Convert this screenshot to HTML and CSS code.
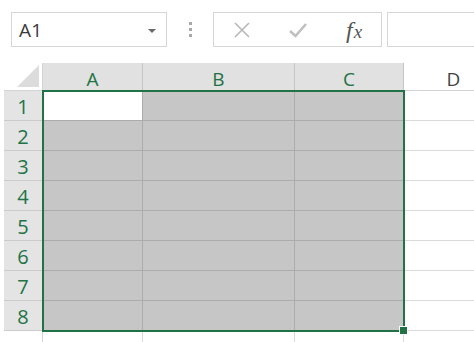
FILE: index.html
```html
<!DOCTYPE html>
<html>
<head>
<meta charset="utf-8">
<link rel="stylesheet" href="styles.css">
</head>
<body>
<div class="toolbar">
  <div class="namebox">
    <span class="ref">A1</span>
    <span class="arrow"></span>
  </div>
  <div class="grip"><i></i><i></i><i></i></div>
  <div class="fbuttons">
    <svg class="ico" width="20" height="20" viewBox="0 0 20 20"><path d="M3 3L17 17M17 3L3 17" stroke="#b8b8b8" stroke-width="1.6" fill="none"/></svg>
    <svg class="ico" width="20" height="20" viewBox="0 0 20 20"><path d="M2 11L7.5 16L18 4" stroke="#c0c0c0" stroke-width="2.6" fill="none"/></svg>
    <span class="fx">f<span class="x">x</span></span>
  </div>
  <div class="finput"></div>
</div>
<div class="sheet">
  <div class="grid">
    <div class="corner"><span class="tri"></span></div>
    <div class="ch sel">A</div>
    <div class="ch sel">B</div>
    <div class="ch sel">C</div>
    <div class="ch">D</div>

    <div class="rh sel">1</div><div class="c a1"></div><div class="c s"></div><div class="c s"></div><div class="c"></div>
    <div class="rh sel">2</div><div class="c s"></div><div class="c s"></div><div class="c s"></div><div class="c"></div>
    <div class="rh sel">3</div><div class="c s"></div><div class="c s"></div><div class="c s"></div><div class="c"></div>
    <div class="rh sel">4</div><div class="c s"></div><div class="c s"></div><div class="c s"></div><div class="c"></div>
    <div class="rh sel">5</div><div class="c s"></div><div class="c s"></div><div class="c s"></div><div class="c"></div>
    <div class="rh sel">6</div><div class="c s"></div><div class="c s"></div><div class="c s"></div><div class="c"></div>
    <div class="rh sel">7</div><div class="c s"></div><div class="c s"></div><div class="c s"></div><div class="c"></div>
    <div class="rh sel">8</div><div class="c s"></div><div class="c s"></div><div class="c s"></div><div class="c"></div>
    <div class="rh"></div><div class="c"></div><div class="c"></div><div class="c"></div><div class="c"></div>
  </div>
  <div class="selection"></div>
  <div class="handle"></div>
</div>
</body>
</html>
```
FILE: styles.css
```css
* { box-sizing: border-box; }
html, body { margin: 0; padding: 0; background: #fff; overflow: hidden; }
body {
  width: 474px; height: 342px;
  font-family: "Open Sans", "Noto Sans", sans-serif;
  color: #333;
}
.toolbar {
  display: flex;
  align-items: center;
  height: 63px;
  padding: 12px 0 16px 11px;
  overflow: hidden;
}
.toolbar > * { flex-shrink: 0; }
.namebox {
  width: 156px; height: 35px;
  border: 1px solid #d6d6d6;
  display: flex; align-items: center; justify-content: space-between;
  padding: 0 10px 0 7px;
}
.ref { font-size: 19px; color: #3a3a3a; letter-spacing: 0.3px; }
.arrow {
  width: 0; height: 0;
  border-left: 4px solid transparent;
  border-right: 4px solid transparent;
  border-top: 4px solid #6a6a6a;
  margin-top: 2px;
}
.grip {
  width: 46px;
  display: flex; flex-direction: column; align-items: center; gap: 3px;
}
.grip i { display: block; width: 3px; height: 3px; background: #a8a8a8; }
.fbuttons {
  width: 169px; height: 35px;
  border: 1px solid #d6d6d6;
  display: flex; align-items: center;
  padding-left: 18px;
}
.ico { display: block; }
.fbuttons .ico:nth-child(1) { margin-right: 36px; }
.fbuttons .ico:nth-child(2) { margin-right: 38px; }
.fx {
  font-family: "Liberation Serif", "DejaVu Serif", serif;
  font-style: italic;
  font-size: 24px; color: #555;
  line-height: 1;
}
.fx .x { font-size: 19px; margin-left: 1px; }
.finput {
  margin-left: 5px;
  width: 120px; height: 35px;
  border: 1px solid #d6d6d6;
}
.sheet { position: relative; width: 474px; height: 279px; overflow: hidden; }
.grid {
  display: grid;
  margin-left: 4px;
  grid-template-columns: 39px 100px 152px 109px 100px;
  grid-template-rows: 28px repeat(9, 30px);
}
.corner { position: relative; background: #fff; border-right: 1px solid #d4d4d4; border-bottom: 1px solid #d4d4d4; }
.tri {
  position: absolute; right: 3px; bottom: 3px;
  width: 0; height: 0;
  border-left: 22px solid transparent;
  border-bottom: 22px solid #dcdcdc;
}
.ch {
  display: flex; align-items: center; justify-content: center;
  padding-top: 4px;
  font-size: 19px; color: #444;
  border-right: 1px solid #d4d4d4;
  border-bottom: 1px solid #d4d4d4;
  background: #fff;
}
.ch.sel { background: #e1e1e1; color: #217346; border-right-color: #c6c6c6; }
.rh {
  display: flex; align-items: center; justify-content: center;
  padding-top: 2px;
  font-size: 20px; color: #444;
  border-right: 1px solid #d4d4d4;
  border-bottom: 1px solid #d4d4d4;
  background: #fff;
}
.rh.sel { background: #e4e4e4; color: #217346; border-bottom-color: #cbcbcb; }
.c {
  border-right: 1px solid #dadada;
  border-bottom: 1px solid #dadada;
}
.c.s { background: #c6c6c6; border-right-color: #acacac; border-bottom-color: #acacac; }
.c.a1 { background: #fff; border-right-color: #acacac; border-bottom-color: #acacac; }
.selection {
  position: absolute;
  left: 42px; top: 27px;
  width: 363px; height: 242px;
  border: 2px solid #217346;
  pointer-events: none;
}
.handle {
  position: absolute;
  left: 399px; top: 263px;
  width: 9px; height: 9px;
  background: #217346;
  border: 1px solid #fff;
}
```
